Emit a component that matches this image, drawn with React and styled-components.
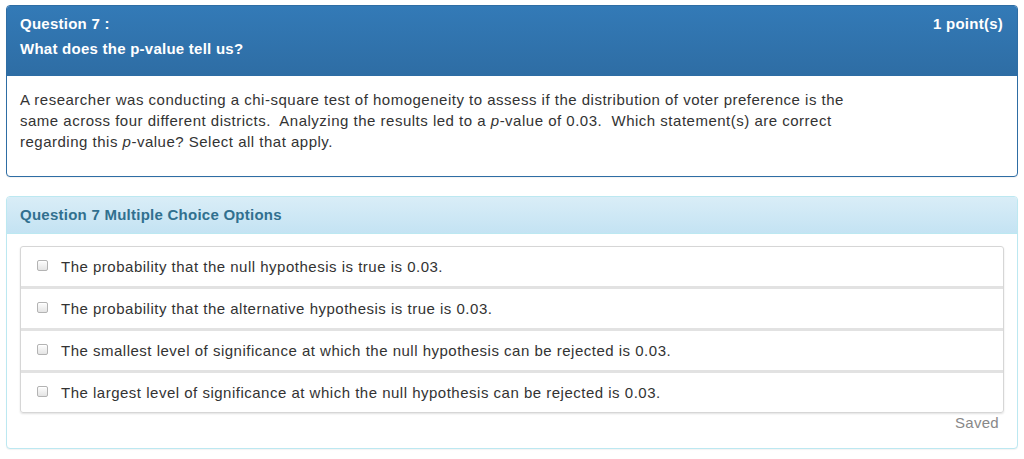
import React from "react";
import styled, { createGlobalStyle } from "styled-components";

const GlobalStyle = createGlobalStyle`
  body {
    margin: 0;
    background: #ffffff;
    font-family: "Liberation Sans", Arial, Helvetica, sans-serif;
    font-size: 15px;
    letter-spacing: 0.5px;
    color: #333333;
  }
`;

const Page = styled.div`
  padding: 5px 6px;
  display: flex;
  flex-direction: column;
  gap: 19px;
`;

const Panel = styled.div`
  border: 1px solid ${(p) => (p.$info ? "#bce8f1" : "#2e6da4")};
  border-radius: 4px;
  background: #fff;
  box-shadow: 0 1px 1px rgba(0, 0, 0, 0.05);
  overflow: hidden;
`;

const PrimaryHeading = styled.div`
  display: flex;
  justify-content: space-between;
  padding: 5px 13px 15px;
  background: linear-gradient(to bottom, #337ab7 0%, #2e6da4 100%);
  color: #fff;
  font-weight: bold;
  font-size: 15px;
  letter-spacing: 0.25px;
  line-height: 25px;
`;

const HeadingLines = styled.div`
  display: flex;
  flex-direction: column;
`;

const Points = styled.div`
  padding-right: 1px;
`;

const QuestionBody = styled.div`
  padding: 13px 13px 24px;
  line-height: 21px;
`;

const QuestionText = styled.p`
  margin: 0;
  white-space: nowrap;
`;

const InfoHeading = styled.div`
  padding: 8px 13px;
  background: linear-gradient(to bottom, #d9edf7 0%, #c4e3f3 100%);
  border-bottom: 1px solid #bce8f1;
  color: #31708f;
  font-weight: bold;
  font-size: 15px;
  letter-spacing: 0.25px;
  line-height: 20px;
`;

const OptionsBody = styled.div`
  padding: 12px 13px 6px;
  display: flex;
  flex-direction: column;
`;

const OptionList = styled.div`
  border: 1px solid #d6d6d6;
  border-radius: 3px;
  box-shadow: 0 1px 2px rgba(0, 0, 0, 0.12);
  display: flex;
  flex-direction: column;
`;

const OptionRow = styled.label`
  display: flex;
  align-items: center;
  gap: 13px;
  height: 39px;
  padding: 0 16px;
  border-top: ${(p) => (p.$first ? "none" : "3px solid #e2e2e2")};
  line-height: 20px;
  color: #333;
`;

const Box = styled.span`
  width: 9px;
  height: 9px;
  border: 1px solid #b3b3b3;
  border-radius: 2px;
  background: linear-gradient(to bottom, #fdfdfd, #e4e4e4);
  box-shadow: inset 0 1px 0 #fff;
  flex-shrink: 0;
  margin-top: -3px;
`;

const Status = styled.div`
  align-self: flex-end;
  color: #888;
  font-size: 15px;
  letter-spacing: 0.3px;
  line-height: 20px;
  padding: 0 5px 0 0;
  height: 29px;
`;

const options = [
  "The probability that the null hypothesis is true is 0.03.",
  "The probability that the alternative hypothesis is true is 0.03.",
  "The smallest level of significance at which the null hypothesis can be rejected is 0.03.",
  "The largest level of significance at which the null hypothesis can be rejected is 0.03.",
];

const App = () => {
  return (
    <>
      <GlobalStyle />
      <Page>
        <Panel>
          <PrimaryHeading>
            <HeadingLines>
              <span>Question 7 :</span>
              <span>What does the p-value tell us?</span>
            </HeadingLines>
            <Points>1 point(s)</Points>
          </PrimaryHeading>
          <QuestionBody>
            <QuestionText>
              A researcher was conducting a chi-square test of homogeneity to
              assess if the distribution of voter preference is the
              <br />
              same across four different districts.{"\u00a0 "}Analyzing the
              results led to a <i>p</i>-value of 0.03.{"\u00a0 "}Which
              statement(s) are correct
              <br />
              regarding this <i>p</i>-value? Select all that apply.
            </QuestionText>
          </QuestionBody>
        </Panel>
        <Panel $info>
          <InfoHeading>Question 7 Multiple Choice Options</InfoHeading>
          <OptionsBody>
            <OptionList>
              {options.map((o, i) => (
                <OptionRow key={i} $first={i === 0}>
                  <Box />
                  <span>{o}</span>
                </OptionRow>
              ))}
            </OptionList>
            <Status>Saved</Status>
          </OptionsBody>
        </Panel>
      </Page>
    </>
  );
};

export default App;
